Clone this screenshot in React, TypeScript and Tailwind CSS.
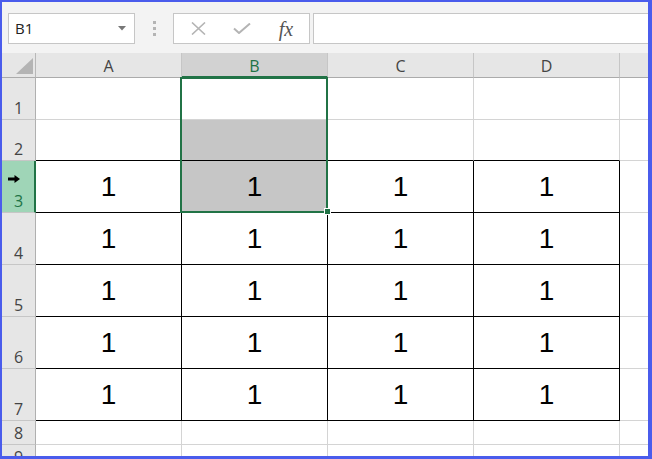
import React from 'react';

const GRID = '#d4d4d4';
const GREEN = '#217346';

const rows = [
  { n: 1, h: 42 },
  { n: 2, h: 41 },
  { n: 3, h: 52 },
  { n: 4, h: 52 },
  { n: 5, h: 52 },
  { n: 6, h: 52 },
  { n: 7, h: 52 },
  { n: 8, h: 24 },
  { n: 9, h: 24 },
];

const cols = ['A', 'B', 'C', 'D'];

function ArrowRight() {
  return (
    <svg width="12" height="8" viewBox="0 0 12 8" className="absolute left-[6px] top-[14px]">
      <path d="M0 2.5h6.5V0L12 4l-5.5 4V5.5H0z" fill="#000" />
    </svg>
  );
}

function Toolbar() {
  return (
    <div className="h-[51px] bg-[#f3f3f3] flex items-start pt-[11px] pl-[6px] font-['Open_Sans',sans-serif]">
      {/* name box */}
      <div className="w-[127px] h-[31px] bg-white border border-[#c6c6c6] flex items-center justify-between pl-[6px] pr-[8px]">
        <span className="text-[15px] text-[#222] leading-none">B1</span>
        <svg width="8" height="5" viewBox="0 0 8 5">
          <path d="M0 0h8L4 4.5z" fill="#777" />
        </svg>
      </div>
      <div className="w-[38px] h-[31px] flex flex-col items-center justify-center gap-[3px]">
        <div className="w-[3px] h-[3px] bg-[#b4b4b4]" />
        <div className="w-[3px] h-[3px] bg-[#b4b4b4]" />
        <div className="w-[3px] h-[3px] bg-[#b4b4b4]" />
      </div>
      {/* function buttons */}
      <div className="w-[137px] h-[31px] bg-white border border-[#c6c6c6] flex items-center">
        <div className="w-[46px] flex justify-center pl-[2px]">
          <svg width="15" height="13" viewBox="0 0 15 13">
            <path d="M1 0.5l13 12M14 0.5l-13 12" stroke="#b4b4b4" strokeWidth="1.6" fill="none" />
          </svg>
        </div>
        <div className="w-[44px] flex justify-center">
          <svg width="18" height="11" viewBox="0 0 18 11">
            <path d="M1 5.5l5 4.5L17 0.5" stroke="#b4b4b4" strokeWidth="2" fill="none" />
          </svg>
        </div>
        <div className="w-[44px] flex justify-center">
          <span className="font-['Liberation_Serif',serif] italic text-[20px] leading-none text-[#555]">fx</span>
        </div>
      </div>
      <div className="ml-[3px] flex-1 h-[31px] bg-white border border-[#c6c6c6] border-r-0" />
    </div>
  );
}

function HeaderRow() {
  return (
    <div className="flex h-[25px] font-['Open_Sans',sans-serif]">
      <div className="w-[34px] shrink-0 bg-[#e6e6e6] border-r border-r-[#b8b8b8] border-b border-b-[#ababab] relative">
        <svg width="17" height="16" viewBox="0 0 17 16" className="absolute left-[14px] top-[5px]">
          <path d="M17 0v16H0z" fill="#b4b4b4" />
        </svg>
      </div>
      {cols.map((c) => {
        const sel = c === 'B';
        return (
          <div
            key={c}
            className={
              sel
                ? 'w-[146px] shrink-0 bg-[#d2d2d2] border-r border-r-[#c6c6c6] border-b-2 border-b-[#217346] flex items-center justify-center text-[16px] text-[#217346] pt-[2px]'
                : 'w-[146px] shrink-0 bg-[#e6e6e6] border-r border-r-[#c6c6c6] border-b border-b-[#ababab] flex items-center justify-center text-[16px] text-[#444] pt-[1px]'
            }
          >
            {c}
          </div>
        );
      })}
      <div className="w-[40px] shrink-0 bg-[#e6e6e6] border-b border-b-[#ababab]" />
    </div>
  );
}

function GridRow({ n, h }: { n: number; h: number }) {
  const active = n === 3;
  const inTable = n >= 3 && n <= 7;
  const bottomBlack = n >= 2 && n <= 7;
  return (
    <div className="flex shrink-0" style={{ height: h }}>
      <div
        className={
          active
            ? 'relative w-[34px] shrink-0 bg-[#9fd5b7] border-r-2 border-r-[#217346] border-b border-b-[#c6c6c6] flex items-end justify-center text-[16px] text-[#217346] font-["Open_Sans",sans-serif] leading-none pb-[3px] pl-[1px]'
            : 'w-[34px] shrink-0 bg-[#e6e6e6] border-r border-r-[#b0b0b0] border-b border-b-[#c6c6c6] flex items-end justify-center text-[16px] text-[#444] font-["Open_Sans",sans-serif] leading-none pb-[3px]'
        }
      >
        {active && <ArrowRight />}
        {n}
      </div>
      {cols.map((c) => {
        const gray = c === 'B' && (n === 2 || n === 3);
        return (
          <div
            key={c}
            className="w-[146px] shrink-0 border-r border-b flex items-center justify-center font-['Liberation_Sans',Arial,sans-serif] text-[28px] text-black leading-none"
            style={{
              borderRightColor: inTable ? '#000' : GRID,
              borderBottomColor: bottomBlack ? '#000' : GRID,
              backgroundColor: gray ? '#c6c6c6' : '#fff',
            }}
          >
            {inTable ? '1' : ''}
          </div>
        );
      })}
      <div className="w-[40px] shrink-0 border-b" style={{ borderBottomColor: GRID }} />
    </div>
  );
}

export default function App() {
  return (
    <div className="w-[652px] h-[459px] overflow-hidden bg-white border-[#4a5cec] border-l-2 border-t-2 border-r-4 border-b-[3px] flex flex-col">
      <Toolbar />
      <div className="relative flex-1 overflow-hidden">
        <HeaderRow />
        {rows.map((r) => (
          <GridRow key={r.n} n={r.n} h={r.h} />
        ))}
        {/* selection B1:B3 */}
        <div
          className="absolute left-[178px] top-[24px] w-[148px] h-[136px] border-2 pointer-events-none"
          style={{ borderColor: GREEN }}
        />
        <div
          className="absolute left-[322px] top-[155px] w-[7px] h-[7px] border border-white pointer-events-none"
          style={{ backgroundColor: GREEN }}
        />
      </div>
    </div>
  );
}
